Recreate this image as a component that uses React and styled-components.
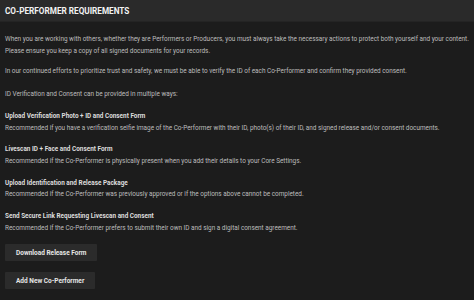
import React from 'react';
import styled, { createGlobalStyle } from 'styled-components';

const Global = createGlobalStyle`
  html, body {
    margin: 0;
    padding: 0;
    background: #1c1c1c;
  }
  body {
    font-family: Roboto, "Liberation Sans", sans-serif;
  }
`;

const Panel = styled.div`
  width: 474px;
  height: 300px;
  background: #1c1c1c;
  overflow: hidden;
`;

const Header = styled.div`
  height: 21px;
  background: #2a2a2a;
  display: flex;
  align-items: center;
  padding: 0 5px;
  border-bottom: 1px solid #242424;
`;

const Title = styled.h1`
  margin: 0;
  font-size: 8.2px;
  font-weight: 700;
  color: #f2f2f2;
`;

const Body = styled.div`
  padding: 12px 5px 0;
  display: flex;
  flex-direction: column;
`;

const Para = styled.p`
  margin: 0 0 ${({ gap }) => gap ?? 10}px;
  font-size: 6.4px;
  line-height: 11.7px;
  color: #bdbdbd;
`;

const Option = styled.div`
  margin-bottom: 10px;
`;

const OptionTitle = styled.div`
  font-size: 6.4px;
  font-weight: 700;
  line-height: 11.7px;
  color: #dcdcdc;
`;

const Button = styled.button`
  align-self: flex-start;
  background: #2b2b2b;
  border: none;
  border-radius: 1px;
  color: #e6e6e6;
  font-family: Roboto, "Liberation Sans", sans-serif;
  font-size: 6.5px;
  font-weight: 700;
  height: 17px;
  padding: 0 11px;
  margin-bottom: 11px;
`;

const options = [
  {
    title: 'Upload Verification Photo + ID and Consent Form',
    text: 'Recommended if you have a verification selfie image of the Co-Performer with their ID, photo(s) of their ID, and signed release and/or consent documents.',
  },
  {
    title: 'Livescan ID + Face and Consent Form',
    text: 'Recommended if the Co-Performer is physically present when you add their details to your Core Settings.',
  },
  {
    title: 'Upload Identification and Release Package',
    text: 'Recommended if the Co-Performer was previously approved or if the options above cannot be completed.',
  },
  {
    title: 'Send Secure Link Requesting Livescan and Consent',
    text: 'Recommended if the Co-Performer prefers to submit their own ID and sign a digital consent agreement.',
  },
];

export default function App() {
  return (
    <Panel>
      <Global />
      <Header>
        <Title>CO-PERFORMER REQUIREMENTS</Title>
      </Header>
      <Body>
        <Para gap={9}>
          When you are working with others, whether they are Performers or Producers, you must always take the necessary actions to protect both yourself and your content.
          <br />
          Please ensure you keep a copy of all signed documents for your records.
        </Para>
        <Para gap={11}>
          In our continued efforts to prioritize trust and safety, we must be able to verify the ID of each Co-Performer and confirm they provided consent.
        </Para>
        <Para>ID Verification and Consent can be provided in multiple ways:</Para>
        {options.map((o) => (
          <Option key={o.title}>
            <OptionTitle>{o.title}</OptionTitle>
            <Para gap={0}>{o.text}</Para>
          </Option>
        ))}
        <Button>Download Release Form</Button>
        <Button>Add New Co-Performer</Button>
      </Body>
    </Panel>
  );
}
